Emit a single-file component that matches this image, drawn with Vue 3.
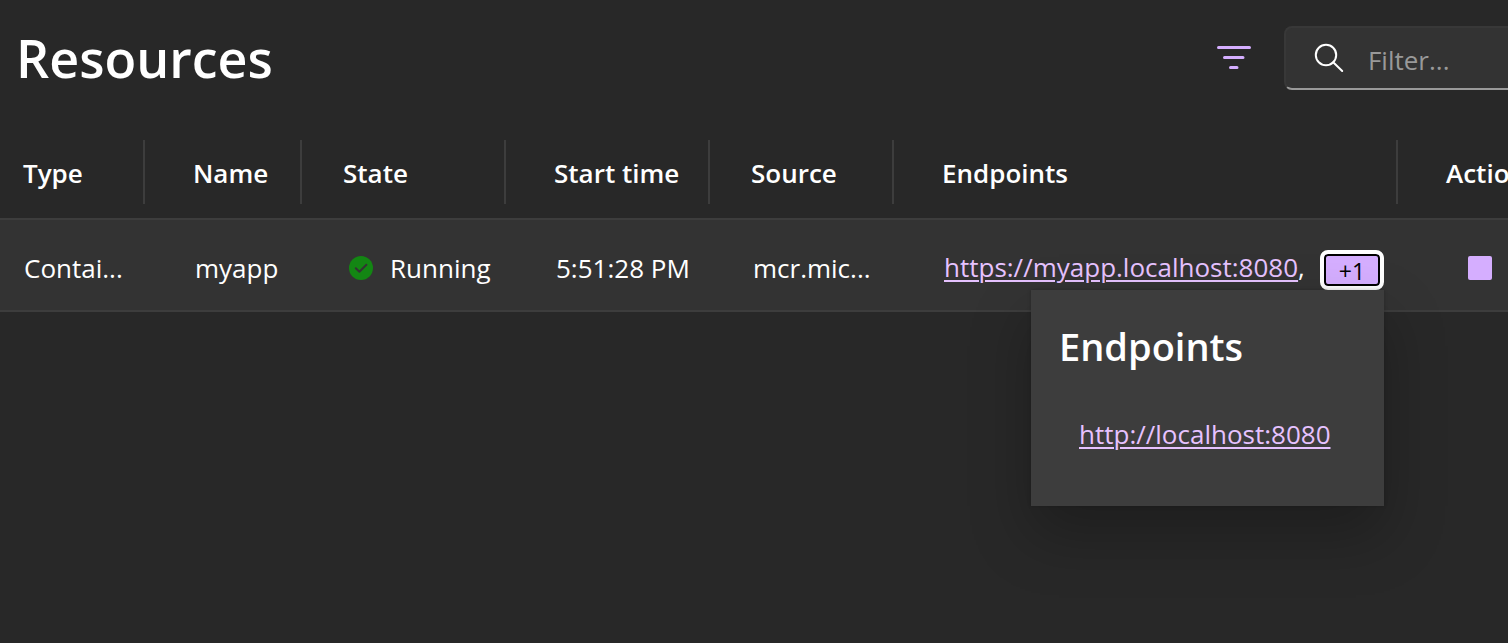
<template>
  <div class="page">
    <main class="content">
      <header class="toolbar">
        <h1>Resources</h1>
        <button type="button" class="icon-button filter-button" aria-label="Filter resources">
          <svg viewBox="0 0 34 24" width="34" height="24" aria-hidden="true">
            <path d="M1.5 1.5h31M7.5 11.5h18.5M13.5 21.5h6.5" />
          </svg>
        </button>
        <label class="search">
          <svg viewBox="0 0 30 30" width="30" height="30" aria-hidden="true">
            <circle cx="12" cy="12" r="10.2" />
            <path d="M19.2 19.2 28.2 28" />
          </svg>
          <input v-model="filter" type="search" placeholder="Filter..." aria-label="Filter" />
        </label>
      </header>

      <table>
        <colgroup>
          <col v-for="col in columns" :key="col.key" :class="'col-' + col.key" />
        </colgroup>
        <thead>
          <tr>
            <th v-for="col in columns" :key="col.key" scope="col" :class="col.indent">
              <div class="heading">{{ col.title }}</div>
            </th>
          </tr>
        </thead>
        <tbody>
          <tr v-for="row in visibleRows" :key="row.name">
            <td class="first">{{ row.type }}</td>
            <td class="wide">{{ row.name }}</td>
            <td class="snug">
              <div class="state">
                <svg viewBox="0 0 24 24" width="24" height="24" aria-hidden="true">
                  <circle cx="12" cy="12" r="12" />
                  <path d="M6.8 12.2 10.4 15.8 17.4 8.8" />
                </svg>
                {{ row.state }}
              </div>
            </td>
            <td class="wide">{{ row.startTime }}</td>
            <td class="snug">{{ row.source }}</td>
            <td class="wide">
              <div class="endpoints">
                <span class="endpoint-list">
                  <a :href="row.endpoint">{{ row.endpoint }}</a>,
                </span>
                <div class="overflow">
                  <button type="button" class="badge" :aria-expanded="popupOpen" @click="togglePopup">
                    +{{ row.moreEndpoints.length }}
                  </button>
                  <section v-if="popupOpen" class="popup">
                    <h2>Endpoints</h2>
                    <a v-for="url in row.moreEndpoints" :key="url" :href="url">{{ url }}</a>
                  </section>
                </div>
              </div>
            </td>
            <td class="actions">
              <button type="button" class="icon-button" aria-label="Stop">
                <svg class="stop" viewBox="0 0 24 24" width="24" height="24" aria-hidden="true">
                  <rect width="24" height="24" rx="2" />
                </svg>
              </button>
            </td>
          </tr>
        </tbody>
      </table>
    </main>
  </div>
</template>

<script setup>
import { computed, ref } from 'vue'

const filter = ref('')
const popupOpen = ref(true)

const columns = [
  { key: 'type', title: 'Type', indent: 'first' },
  { key: 'name', title: 'Name', indent: 'wide' },
  { key: 'state', title: 'State', indent: 'snug' },
  { key: 'start', title: 'Start time', indent: 'wide' },
  { key: 'source', title: 'Source', indent: 'snug' },
  { key: 'endpoints', title: 'Endpoints', indent: 'wide' },
  { key: 'actions', title: 'Actions', indent: 'wide' }
]

const rows = [
  {
    type: 'Contai...',
    name: 'myapp',
    state: 'Running',
    startTime: '5:51:28 PM',
    source: 'mcr.mic...',
    endpoint: 'https://myapp.localhost:8080',
    moreEndpoints: ['http://localhost:8080']
  }
]

const visibleRows = computed(() => {
  return rows.filter((row) => row.name.includes(filter.value))
})

const togglePopup = () => {
  popupOpen.value = !popupOpen.value
}
</script>

<style>
body {
  margin: 0;
  background: #282828;
}
</style>

<style scoped>
.page {
  min-height: 100vh;
  overflow: hidden;
  color: #ffffff;
  font-family: "Segoe UI", "Open Sans", "Noto Sans", sans-serif;
  font-size: 26px;
  line-height: 36px;
}

/* the grid is wider than the window and runs off its right edge */
.content {
  width: 112%;
  padding-top: 26px;
}

.toolbar {
  display: flex;
  align-items: center;
  padding: 0 21px 36px 16px;
}

h1 {
  margin: 0 auto 0 0;
  font-size: 52px;
  font-weight: 600;
  line-height: 64px;
}

.icon-button {
  display: flex;
  padding: 0;
  border: 0;
  background: none;
  cursor: pointer;
}

.filter-button {
  margin-right: 33px;
}

.filter-button svg {
  fill: none;
  stroke: #d5aeff;
  stroke-width: 3;
  stroke-linecap: round;
}

.search {
  box-sizing: border-box;
  display: flex;
  align-items: center;
  gap: 24px;
  width: 384px;
  height: 64px;
  padding: 0 28px;
  border: 2px solid #383838;
  border-bottom-color: #9a9a9a;
  border-radius: 8px;
  background: #333333;
}

.search svg {
  flex: none;
  fill: none;
  stroke: #ffffff;
  stroke-width: 2;
  stroke-linecap: round;
}

.search input {
  flex: 1;
  min-width: 0;
  padding: 4px 0 0;
  border: 0;
  outline: 0;
  background: none;
  color: #ffffff;
  font: inherit;
}

.search input::placeholder {
  color: #999999;
  opacity: 1;
}

table {
  width: 100%;
  table-layout: fixed;
  border-collapse: separate;
  border-spacing: 0;
}

.col-type {
  width: 145px;
}

.col-name {
  width: 157px;
}

.col-state,
.col-start {
  width: 204px;
}

.col-source {
  width: 184px;
}

.col-endpoints {
  width: 504px;
}

th {
  padding: 14px 0;
  border-bottom: 2px solid #3d3d3d;
  font-weight: 600;
  text-align: left;
}

.heading {
  height: 64px;
  border-right: 2px solid #3d3d3d;
  line-height: 66px;
}

td {
  height: 84px;
  padding: 6px 0 0;
  border-bottom: 2px solid #3d3d3d;
  background: #333333;
  white-space: nowrap;
}

th.first {
  padding-left: 23px;
}

th.wide {
  padding-left: 48px;
}

th.snug {
  padding-left: 41px;
}

td.first {
  padding-left: 24px;
}

td.wide {
  padding-left: 50px;
}

td.snug {
  padding-left: 43px;
}

.state {
  display: flex;
  align-items: center;
  gap: 17px;
  padding-left: 4px;
}

.state circle {
  fill: #138613;
}

.state path {
  fill: none;
  stroke: #333333;
  stroke-width: 2;
  stroke-linecap: round;
  stroke-linejoin: round;
}

a {
  color: #e6c2ff;
  text-decoration: underline;
  text-decoration-thickness: 2px;
  text-underline-offset: 3px;
}

.endpoints {
  display: flex;
  align-items: center;
  justify-content: space-between;
  padding: 4px 14px 0 0;
}

.endpoint-list {
  padding-bottom: 6px;
}

.overflow {
  position: relative;
}

.badge {
  box-sizing: border-box;
  display: block;
  width: 64px;
  height: 40px;
  padding: 2px 0 0;
  border: 4px solid #ffffff;
  border-radius: 8px;
  background: #d5aeff;
  box-shadow: inset 0 0 0 2px #000000;
  color: #000000;
  font: inherit;
  font-size: 23px;
  line-height: 30px;
  cursor: pointer;
}

.popup {
  position: absolute;
  top: 100%;
  right: 0;
  z-index: 1;
  box-sizing: border-box;
  min-width: 353px;
  padding: 32px 48px 54px 28px;
  background: #3d3d3d;
  box-shadow: 0 0 4px rgba(0, 0, 0, 0.2), 0 28px 56px rgba(0, 0, 0, 0.26);
}

h2 {
  margin: 0 0 46px;
  font-size: 38px;
  font-weight: 600;
  line-height: 48px;
}

.popup a {
  display: block;
  margin-left: 20px;
}

.actions {
  padding-left: 70px;
}

.stop {
  fill: #d5aeff;
}
</style>
